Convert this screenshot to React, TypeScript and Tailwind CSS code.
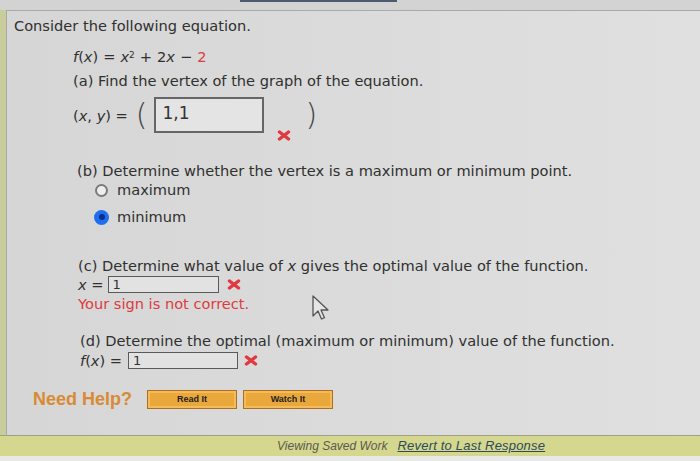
import React from 'react';

const RedX = ({ className = '' }: { className?: string }) => (
  <svg viewBox="0 0 14 11" className={`w-[14px] h-[11px] ${className}`}>
    <path d="M2.5 2 L11.5 9 M11.5 2 L2.5 9" stroke="#e0393f" strokeWidth="3.4" strokeLinecap="round" />
  </svg>
);

const Cursor = () => (
  <svg viewBox="0 0 20 28" className="absolute left-[311px] top-[294px] w-[20px] h-[28px]">
    <path
      d="M2 2 L2 22 L7 17 L10.5 25 L13.5 23.7 L10 16 L17 16 Z"
      fill="#e4e5e4"
      stroke="#555"
      strokeWidth="1.3"
      strokeLinejoin="round"
    />
  </svg>
);

const Radio = ({ checked }: { checked?: boolean }) =>
  checked ? (
    <span className="w-[15px] h-[15px] rounded-full bg-[#1d6ff0] flex items-center justify-center">
      <span className="w-[6px] h-[6px] rounded-full bg-[#0b2f8a]" />
    </span>
  ) : (
    <span className="w-[13px] h-[13px] rounded-full border-2 border-[#7a7a7a] bg-[#eeeeee]" />
  );

const AnswerBox = ({ value, className = '' }: { value: string; className?: string }) => (
  <div className={`border border-[#5a5a5a] bg-[#e1e2e1] flex items-center pl-[4px] text-[13px] text-[#333] ${className}`}>
    {value}
  </div>
);

const Paren = ({ children }: { children: React.ReactNode }) => (
  <span className="text-[30px] font-extralight leading-[30px] text-[#444]">{children}</span>
);

export default function App() {
  return (
    <div className="relative w-[700px] h-[461px] overflow-hidden bg-[#d4d5d4] font-['DejaVu_Sans',sans-serif] text-[14.6px] text-[#303030] flex flex-col">
      {/* top strip */}
      <div className="h-[10px] flex bg-[#d2d3d2]">
        <div className="ml-[240px] w-[157px] h-[2px] bg-[#4b5a6c]" />
      </div>

      <div className="flex flex-1">
        <div className="w-[6px] bg-[#c9cd9c]" />
        <div className="flex-1 border-t border-l border-[#a8a9a8] bg-gradient-to-r from-[#d5d6d5] to-[#dfe0df] pt-[7px] pl-[7px]">
          <p className="leading-[16px]">Consider the following equation.</p>

          <div className="ml-[59px]">
            <p className="mt-[15px] leading-[16px] flex items-baseline gap-[5px]">
              <span>
                <i>f</i>(<i>x</i>)
              </span>
              <span>=</span>
              <span>
                <i>x</i>
                <sup className="text-[9px]">2</sup>
              </span>
              <span>+</span>
              <span>
                2<i>x</i>
              </span>
              <span>−</span>
              <span className="text-[#e0393f]">2</span>
            </p>
            <p className="mt-[8px] leading-[16px]">(a) Find the vertex of the graph of the equation.</p>

            <div className="mt-[8px] flex items-start h-[36px]">
              <span className="mt-[8px]">
                (<i>x</i>, <i>y</i>) =
              </span>
              <span className="ml-[8px] mt-[3px]">
                <Paren>(</Paren>
              </span>
              <div className="ml-[6px] w-[110px] h-[36px] border-2 border-[#666] bg-[#e3e4e3] flex items-center pb-[3px] pl-[7px] text-[17px] text-[#333]">
                1,1
              </div>
              <RedX className="ml-[13px] mt-[33px]" />
              <span className="ml-[15px] mt-[3px]">
                <Paren>)</Paren>
              </span>
            </div>

            <p className="mt-[30px] ml-[4px] leading-[16px]">
              (b) Determine whether the vertex is a maximum or minimum point.
            </p>
            <div className="ml-[22px] mt-[3px] flex items-center gap-[9px] h-[16px]">
              <Radio />
              <span>maximum</span>
            </div>
            <div className="ml-[21px] mt-[11px] flex items-center gap-[8px] h-[16px]">
              <Radio checked />
              <span>minimum</span>
            </div>

            <p className="mt-[33px] ml-[5px] leading-[16px]">
              (c) Determine what value of <i>x</i> gives the optimal value of the function.
            </p>
            <div className="ml-[5px] mt-[2px] flex items-center h-[17px]">
              <span>
                <i>x</i> =
              </span>
              <AnswerBox value="1" className="ml-[4px] w-[111px] h-[17px]" />
              <RedX className="ml-[8px]" />
            </div>
            <p className="ml-[5px] mt-[3px] leading-[16px] text-[#df3a3e]">Your sign is not correct.</p>

            <p className="mt-[21px] ml-[7px] leading-[16px]">
              (d) Determine the optimal (maximum or minimum) value of the function.
            </p>
            <div className="ml-[7px] mt-[3px] flex items-center h-[17px]">
              <span>
                <i>f</i>(<i>x</i>) =
              </span>
              <AnswerBox value="1" className="ml-[6px] w-[110px] h-[17px]" />
              <RedX className="ml-[6px]" />
            </div>
          </div>

          <div className="mt-[21px] ml-[19px] flex items-center">
            <span className="font-['Liberation_Sans',sans-serif] font-bold text-[18px] leading-[19px] text-[#d98a34]">
              Need Help?
            </span>
            <button className="ml-[15px] w-[90px] h-[19px] border border-[#b46c1c] bg-[#eaa73b] shadow-[inset_0_0_0_2px_#f1bd5c] font-['Liberation_Sans',sans-serif] font-bold text-[9px] text-[#222]">
              Read It
            </button>
            <button className="ml-[6px] w-[90px] h-[19px] border border-[#b46c1c] bg-[#eaa73b] shadow-[inset_0_0_0_2px_#f1bd5c] font-['Liberation_Sans',sans-serif] font-bold text-[9px] text-[#222]">
              Watch It
            </button>
          </div>
        </div>
      </div>

      {/* bottom bar */}
      <div className="h-[21px] border-t border-[#9fa08a] bg-[#d5d78e] flex items-center pl-[277px] font-['Liberation_Sans',sans-serif] italic">
        <span className="text-[12px] text-[#5a5a50]">Viewing Saved Work</span>
        <span className="ml-[10px] text-[13px] tracking-[0.2px] underline text-[#2c4a58]">Revert to Last Response</span>
      </div>
      <div className="h-[5px] bg-[#e8e8e6]" />

      <Cursor />
    </div>
  );
}
